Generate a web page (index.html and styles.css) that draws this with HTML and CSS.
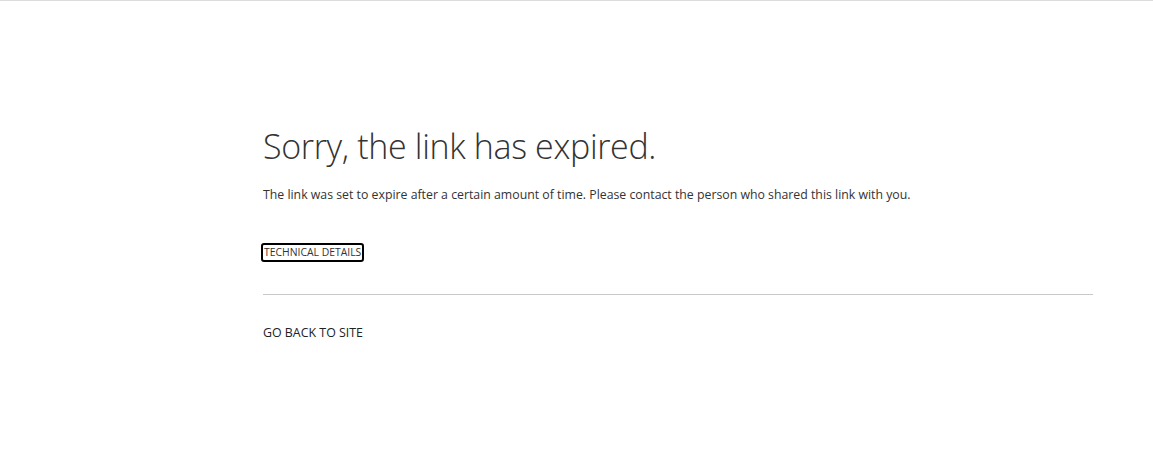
FILE: index.html
```html
<!DOCTYPE html>
<html>
<head>
<meta charset="utf-8">
<link rel="stylesheet" href="styles.css">
</head>
<body>
<div class="page">
  <main class="content">
    <h1 class="title">Sorry, the link has expired.</h1>
    <p class="message">The link was set to expire after a certain amount of time. Please contact the person who shared this link with you.</p>
    <div class="details-row">
      <button class="details-btn">TECHNICAL DETAILS</button>
    </div>
    <hr class="divider">
    <a class="back-link" href="#">GO BACK TO SITE</a>
  </main>
</div>
</body>
</html>
```
FILE: styles.css
```css
html, body {
  margin: 0;
  padding: 0;
  background: #fff;
}
body {
  font-family: "Open Sans", "Noto Sans", sans-serif;
  color: #333;
}
.page {
  border-top: 1px solid #dcdcdc;
  min-height: 458px;
  box-sizing: border-box;
}
.content {
  padding: 121px 60px 0 263px;
}
.title {
  margin: 0;
  font-weight: 300;
  font-size: 34px;
  letter-spacing: -0.35px;
  line-height: 48px;
  color: #333;
}
.message {
  margin: 15px 0 0;
  font-size: 12.3px;
  line-height: 20px;
  color: #333;
}
.details-row {
  margin-top: 34px;
}
.details-btn {
  margin-left: -2px;
  padding: 1px 1px;
  font-family: inherit;
  font-size: 10.4px;
  line-height: 13px;
  color: #333;
  background: #fff;
  border: 2px solid #000;
  border-radius: 3px;
}
.divider {
  margin: 32px 0 0;
  border: 0;
  border-top: 1px solid #c8c8c8;
}
.back-link {
  display: inline-block;
  margin-top: 30px;
  font-size: 12.4px;
  line-height: 16px;
  color: #222;
  text-decoration: none;
}
```
